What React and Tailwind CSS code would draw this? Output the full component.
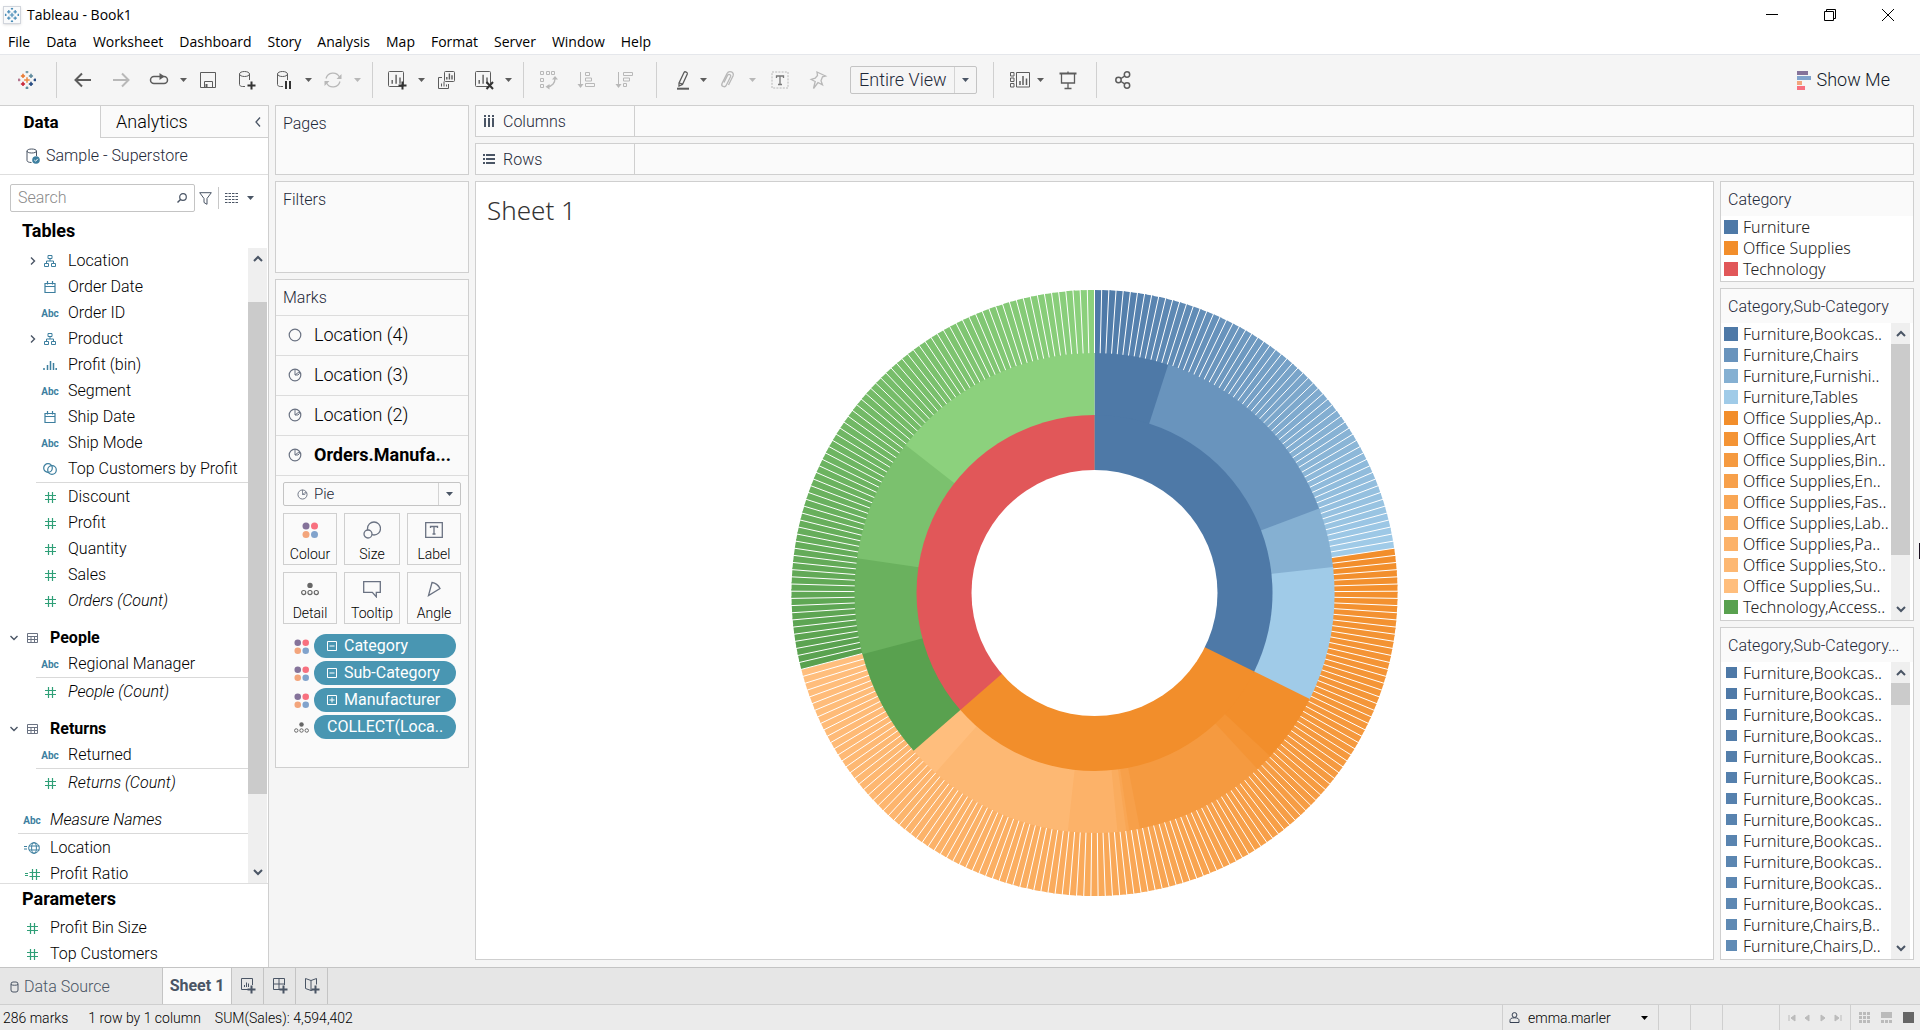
import React from 'react';

const FURNITURE = ['#4e79a7', '#a0cbe8'];
const OFFICE = ['#f28e2b', '#ffbe7d'];
const TECH = ['#59a14f', '#8cd17d'];

const mix = ([a, b], t) => {
    const ch = (hex, i) => parseInt(hex.slice(1 + i * 2, 3 + i * 2), 16);
    return `rgb(${[0, 1, 2].map((i) => Math.round(ch(a, i) + (ch(b, i) - ch(a, i)) * t)).join(',')})`;
};

const ramp = (pair, n) => Array.from({ length: n }, (_, i) => mix(pair, i / (n - 1)));

// ---------- chart ----------

// end angles in degrees, clockwise from the top
const categorySlices = [
    { end: 116.2, color: '#4e79a7' },
    { end: 228.9, color: '#f28e2b' },
    { end: 360, color: '#e15759' },
];

const subCategoryEnds = [17.9, 69.4, 83.8, 116.2, 132.9, 137.2, 169.1, 171.7, 172.4, 174.5, 186.4, 221.5, 228.9, 255.2, 278.3, 308.1, 360];
const subCategoryColors = [...ramp(FURNITURE, 4), ...ramp(OFFICE, 9), ...ramp(TECH, 4)];
const subCategorySlices = subCategoryEnds.map((end, i) => ({ end, color: subCategoryColors[i] }));

const manufacturerColors = [...ramp(FURNITURE, 60), ...ramp(OFFICE, 128), ...ramp(TECH, 77)];
const manufacturerSlices = manufacturerColors.map((color, i) => ({
    end: ((i + 1) * 360) / manufacturerColors.length,
    color,
}));

const polar = (r, deg) => {
    const a = (deg * Math.PI) / 180;
    return [(r * Math.sin(a)).toFixed(2), (-r * Math.cos(a)).toFixed(2)];
};

const wedge = (r, a0, a1) => `M0 0L${polar(r, a0)} A${r} ${r} 0 ${a1 - a0 > 180 ? 1 : 0} 1 ${polar(r, a1)}Z`;

// each slice runs a little under the next one, so no seam shows between them
const Pie = ({ slices, r, lines }) => (
    <g>
        {slices.map((s, i) => (
            <path key={i} d={wedge(r, i ? slices[i - 1].end : 0, Math.min(s.end + 0.4, 360))} fill={s.color} />
        ))}
        {lines && slices.map((s, i) => {
            const [x, y] = polar(r + 1, s.end);
            return <line key={i} x1="0" y1="0" x2={x} y2={y} stroke="#fff" strokeWidth="1" />;
        })}
    </g>
);

const Sunburst = () => (
    <svg viewBox="-356 -356 712 712" className="w-full min-h-0 flex-1" role="img" aria-label="Sales by category, sub-category and manufacturer">
        <Pie slices={manufacturerSlices} r={303} lines />
        <Pie slices={subCategorySlices} r={240} />
        <Pie slices={categorySlices} r={178} />
        <circle r="123" fill="#fff" />
    </svg>
);

// ---------- icons ----------

const Svg = ({ size = 20, w, h, className = '', children }) => (
    <svg width={w || size} height={h || size} viewBox={`0 0 ${w || size} ${h || size}`} fill="none" stroke="currentColor" className={`shrink-0 ${className}`}>
        {children}
    </svg>
);

const Caret = ({ className = '' }) => (
    <Svg w={7} h={4} className={className}><path d="M0 0h7L3.5 4z" fill="currentColor" stroke="none" /></Svg>
);

const logoMarks = [
    [9, 9, 4, '#eb8a44'], [5, 5, 3, '#e8762c'], [13, 5, 3, '#5b879b'], [5, 13, 3, '#c72035'], [13, 13, 3, '#1f457e'],
    [9, 1, 2, '#7199a6'], [9, 17, 2, '#59879b'], [1, 9, 2, '#b06f8a'], [17, 9, 2, '#1f457e'],
];

const Logo = ({ mono }) => (
    <Svg size={18}>
        {logoMarks.map(([x, y, r, c], i) => (
            <path key={i} d={`M${x - r / 1.4} ${y}h${r * 1.4}M${x} ${y - r / 1.4}v${r * 1.4}`} stroke={mono ? '#4a8db8' : c} strokeWidth="1.5" />
        ))}
    </Svg>
);

const BarsSheet = ({ x = 1, y = 1, s = 15 }) => (
    <g>
        <rect x={x + 0.5} y={y + 0.5} width={s} height={s} rx="1" />
        <path d={`M${x + s * 0.28} ${y + s * 0.85}v-${s * 0.25}M${x + s * 0.54} ${y + s * 0.85}v-${s * 0.6}M${x + s * 0.8} ${y + s * 0.85}v-${s * 0.42}`} strokeWidth="1.4" />
    </g>
);

const plusMark = <path d="M15.5 11.5v8M11.5 15.5h8" stroke="#333" strokeWidth="2" />;
const dbShape = <path d="M9 16.5H6.5c-2 0-3-1-3-2V4M13.500 4v6M3.500 4c0-1.400 2-2.500 5-2.500s5 1.100 5 2.500-2 2.500-5 2.500-5-1.100-5-2.500z" />;

const tools = {
    back: <path d="M18 10H2.500M9 3.500L2.500 10 9 16.500" strokeWidth="2" />,
    forward: <path d="M2 10h15.500M11 3.500l6.500 6.500-6.500 6.500" strokeWidth="2" />,
    replay: <><path d="M6 6.500H5a3.500 3.500 0 0 0 0 7h10a3.500 3.500 0 0 0 0-7h-3.500" strokeWidth="1.500" /><path d="M6 6.500h6" strokeWidth="1.500" /><path d="M10.500 3l5 3.500-5 3.500z" fill="currentColor" stroke="none" /></>,
    save: <><path d="M2.500 2.500h15v15h-15zM6.500 17.500v-6h8v6" /><path d="M8.500 14v3" strokeWidth="2" /></>,
    newData: <>{dbShape}{plusMark}</>,
    pause: <>{dbShape}<path d="M12 11v8M16 11v8" stroke="#333" strokeWidth="2" /></>,
    refresh: <><path d="M3 8.500a7.300 7.300 0 0 1 13.500-1.500M17 11.500a7.300 7.300 0 0 1-13.500 1.500" strokeWidth="1.300" /><path d="M18.500 4v5h-5zM1.500 16v-5h5z" fill="currentColor" stroke="none" /></>,
    newSheet: <><BarsSheet />{plusMark}</>,
    duplicate: <><BarsSheet x={8} y={1} s={10} /><path d="M6 7.500H2.500v11h10V14" /><path d="M5.500 16.500v-3M8 16.500v-5M10.500 16.500v-2" /></>,
    clear: <><BarsSheet /><path d="M12.500 12l6.500 7M19 12l-6.500 7" stroke="#333" strokeWidth="2" /></>,
    swap: <><path d="M2.500 1.500h3v3h-3zM8.500 1.500h3v3h-3zM13.500 1.500h3v3h-3zM2.500 8.500h3v3h-3zM2.500 14.500h3v3h-3z" /><path d="M17 8.500c0 4-2.500 8-7.500 8" strokeWidth="1.300" /><path d="M14 9.500L17 6l3 3.500zM11.500 14l-4 2.800 4 2.700z" fill="currentColor" stroke="none" /></>,
    sortAsc: <><path d="M4.500 2v14M9.500 2.500h4v3h-4zM9.500 8h6v3h-6zM9.500 13.500h9v3h-9z" /><path d="M1.500 14h6l-3 4z" fill="currentColor" stroke="none" /></>,
    sortDesc: <><path d="M4.500 2v14M9.500 2.500h9v3h-9zM9.500 8h6v3h-6zM9.500 13.500h3v3h-3z" /><path d="M1.500 14h6l-3 4z" fill="currentColor" stroke="none" /></>,
    pen: <><path d="M6 13l5-10.500c.8-1.500 4-.2 3.300 1.500L9.500 14.500 6 16zM6 12.500l3.500 1.800" strokeWidth="1.300" /><path d="M4 18.700h12" strokeWidth="2" /></>,
    clip: <path d="M6 12.500l3.500-7c1-2 4-1 3 1.200l-4.200 8.500c-1.400 2.800-5.500 1.200-4.300-1.800L9 3.500C11 0 16.500 2 15 6l-4.500 9" strokeWidth="1.300" />,
    text: <><rect x="2" y="2" width="16" height="16" strokeDasharray="2 1.200" /><path d="M6.500 8V6h7v2M10 6v8.500M8 14.500h4" stroke="#777" strokeWidth="1.300" /></>,
    pin: <path d="M9 2l8.500 4-3 .8-1.500 4 1.500 4-4.500-2.300-4.500 6 1.700-7-4-2 4-1.300L9.500 5.500z" strokeWidth="1.300" />,
    cards: <><path d="M.5 2.500h3.500v3.500h-3.500zM.5 8h3.500v3.500h-3.500zM.5 13.500h3.500v3.500h-3.500z" /><path d="M6.500 2.500h13v14.500h-13z" /><path d="M10 15v-4M13 15V6M16.500 15V8.500" strokeWidth="1.500" /></>,
    present: <><path d="M1.500 3.500h17" strokeWidth="2" /><path d="M3.500 4v9h13V4M10 1.500v2M10 13v5M6.500 18.500h7" strokeWidth="1.300" /></>,
    share: <g strokeWidth="1.500"><circle cx="5.500" cy="10" r="2.700" /><circle cx="14" cy="4.500" r="2.700" /><circle cx="14" cy="15.500" r="2.700" /><path d="M8 8.500l4-2.700M8 11.500l4 2.700" /></g>,
};

const fieldIcons = {
    hierarchy: <Svg size={12} className="text-[#3d7f9f]"><path d="M4 .5h4v3H4zM6 3.500v2.500M2.500 8V6h7v2M.5 8.500h4v3h-4zM7.500 8.500h4v3h-4z" /></Svg>,
    date: <Svg size={12} className="text-[#3d7f9f]"><path d="M1 2.500h10v9H1zM1 5.500h10M3.500 0v3.500M8.500 0v3.500" strokeWidth="1.200" /></Svg>,
    abc: <span className="text-[10px] font-bold text-[#3d7f9f]">Abc</span>,
    bin: <Svg w={14} h={10} className="text-[#3d7f9f]"><path d="M1 10V8M4.500 10V5M7.500 10V1M10.500 10V3M13.200 10V8" strokeWidth="1.500" /></Svg>,
    set: <Svg w={14} h={12} className="text-[#3d7f9f]"><circle cx="5" cy="5" r="4.300" strokeWidth="1.200" /><circle cx="9" cy="7" r="4.300" strokeWidth="1.200" /></Svg>,
    num: <Svg size={11} className="text-[#2f9f77]"><path d="M3.500 0v11M7.500 0v11M0 3.500h11M0 7.500h11" strokeWidth="1.200" /></Svg>,
    calcNum: <Svg w={15} h={11} className="text-[#2f9f77]"><path d="M0 4.500h3M0 6.500h3M7.500 0v11M11.500 0v11M4.500 3.500H15M4.500 7.500H15" strokeWidth="1.200" /></Svg>,
    calcGeo: <Svg w={16} h={12} className="text-[#3d7f9f]"><path d="M0 4.500h3M0 7h3M5 4h10.500M5 8h10.500" /><circle cx="10" cy="6" r="5.300" /><ellipse cx="10" cy="6" rx="2.400" ry="5.300" /></Svg>,
};

const PieIcon = ({ small, whole }) => (
    <svg viewBox="0 0 14 14" fill="none" stroke="currentColor" className={`shrink-0 text-gray-500 ${small ? 'size-[11px]' : 'size-[14px]'}`}>
        <circle cx="7" cy="7" r="5.800" strokeWidth="1.200" />
        {!whole && <path d="M7 1v6l4.500-3.500M7 7h3a3 3 0 0 0 1.500-3" />}
    </svg>
);

const ColourDots = ({ size = 16 }) => (
    <svg width={size} height={size} viewBox="0 0 16 16" className="shrink-0">
        <circle cx="4" cy="4" r="3.500" fill="#85739a" /><circle cx="12.500" cy="4" r="3.500" fill="#f8707f" />
        <circle cx="4" cy="12.500" r="3.500" fill="#f3a57c" /><circle cx="12.500" cy="12.500" r="3.500" fill="#81a3cc" />
    </svg>
);

const DetailIcon = ({ size = 18 }) => (
    <svg width={size} height={size} viewBox="0 0 20 18" fill="none" stroke="#666" strokeWidth="1.300" className="shrink-0">
        <circle cx="10" cy="5" r="3" fill="#666" stroke="none" />
        <circle cx="3" cy="13" r="2.300" /><circle cx="10" cy="13" r="2.300" /><circle cx="17" cy="13" r="2.300" />
    </svg>
);

const Chevron = ({ down, className = '' }) => (
    <Svg size={8} className={`text-gray-600 ${className}`}>
        <path d={down ? 'M.5 2L4 5.500 7.500 2' : 'M2 .5L5.500 4 2 7.500'} strokeWidth="1.400" />
    </Svg>
);

// ---------- top bars ----------

const menus = ['File', 'Data', 'Worksheet', 'Dashboard', 'Story', 'Analysis', 'Map', 'Format', 'Server', 'Window', 'Help'];

const TitleBar = () => (
    <header className="bg-white font-['Open_Sans',sans-serif] text-sm font-normal text-black">
        <div className="flex h-[29px] items-center">
            <span className="ml-[3px] mr-[6px] border border-gray-300 bg-gray-50 shadow-sm"><Svg size={16}><svg viewBox="-1 -1 20 20"><Logo mono /></svg></Svg></span>
            <span className="flex-1">Tableau - Book1</span>
            <button aria-label="Minimize" className="flex w-[58px] justify-center"><Svg size={12}><path d="M0 5.500h12" /></Svg></button>
            <button aria-label="Restore" className="flex w-[58px] justify-center"><Svg size={12}><path d="M.5 2.500h9v9h-9zM2.500 2.500v-2h9v9h-2" /></Svg></button>
            <button aria-label="Close" className="mr-[3px] flex w-[58px] justify-center"><Svg size={12}><path d="M0 0l12 12M12 0L0 12" /></Svg></button>
        </div>
        <nav className="flex h-[25px] items-center">
            {menus.map((m) => <button key={m} className="px-2">{m}</button>)}
        </nav>
    </header>
);

const Tool = ({ name, label, caret, near, off, className = 'ml-[18px]' }) => (
    <button aria-label={label} className={`flex items-center ${near ? 'gap-[7px]' : 'gap-[11px]'} ${off ? 'text-[#b8b8b8]' : 'text-[#5c5c5c]'} ${className}`}>
        <Svg>{tools[name]}</Svg>
        {caret && <Caret />}
    </button>
);

const Sep = ({ className }) => <span className={`h-9 w-px bg-[#d0d0d0] ${className}`} />;

const Toolbar = () => (
    <div className="flex h-[51px] shrink-0 items-center border-t border-gray-200">
        <button aria-label="Start page" className="ml-[18px]"><Logo /></button>
        <Sep className="ml-5" />
        <Tool name="back" label="Undo" className="ml-4" />
        <Tool name="forward" label="Redo" off />
        <Tool name="replay" label="Replay" caret />
        <Tool name="save" label="Save" className="ml-[11px]" />
        <Tool name="newData" label="New data source" />
        <Tool name="pause" label="Pause updates" caret />
        <Tool name="refresh" label="Refresh" caret off className="ml-[11px]" />
        <Sep className="ml-[11px]" />
        <Tool name="newSheet" label="New worksheet" caret className="ml-[14px]" />
        <Tool name="duplicate" label="Duplicate" className="ml-[11px]" />
        <Tool name="clear" label="Clear sheet" caret />
        <Sep className="ml-[11px]" />
        <Tool name="swap" label="Swap rows and columns" off className="ml-[14px]" />
        <Tool name="sortAsc" label="Sort ascending" off />
        <Tool name="sortDesc" label="Sort descending" off />
        <Sep className="ml-[22px]" />
        <Tool name="pen" label="Highlight" caret near className="ml-4" />
        <Tool name="clip" label="Group" caret off className="ml-[11px]" />
        <Tool name="text" label="Show mark labels" off className="ml-[14px]" />
        <Tool name="pin" label="Fix axes" off />
        <label className="relative ml-[22px] flex h-7 w-[127px] items-center rounded-xs border border-[#c4c4c4] bg-[#f5f5f5]">
            <select aria-label="Fit" className="w-full appearance-none pl-2 text-lg text-gray-800">
                <option>Entire View</option>
            </select>
            <span className="pointer-events-none absolute inset-y-0 right-0 flex w-[22px] items-center justify-center border-l border-[#d4d4d4] text-gray-600"><Caret /></span>
        </label>
        <Sep className="ml-4" />
        <Tool name="cards" label="Show/hide cards" caret near className="ml-4" />
        <Tool name="present" label="Presentation mode" className="ml-[14px]" />
        <Sep className="ml-[18px]" />
        <Tool name="share" label="Share" className="ml-4" />
        <button className="ml-auto mr-[30px] flex items-center gap-[6px] text-lg text-gray-900">
            <Svg w={14} h={19}>
                <g stroke="none">
                    <path d="M0 0h11v4H0z" fill="#85739a" /><path d="M0 5h14v4H0z" fill="#81a3cc" />
                    <path d="M0 10h5v4H0z" fill="#f3a57c" /><path d="M0 15h8v4H0z" fill="#f8707f" />
                </g>
            </Svg>
            Show Me
        </button>
    </div>
);

// ---------- data pane ----------

const ordersFields = [
    ['hierarchy', 'Location', 'open'],
    ['date', 'Order Date'],
    ['abc', 'Order ID'],
    ['hierarchy', 'Product', 'open'],
    ['bin', 'Profit (bin)'],
    ['abc', 'Segment'],
    ['date', 'Ship Date'],
    ['abc', 'Ship Mode'],
    ['set', 'Top Customers by Profit'],
    'rule',
    ['num', 'Discount'],
    ['num', 'Profit'],
    ['num', 'Quantity'],
    ['num', 'Sales'],
    ['num', 'Orders (Count)', 'italic'],
];

const Fields = ({ items, nested }) => (
    <ul className={nested ? 'pl-[36px]' : 'pl-[18px]'}>
        {items.map((f, i) => f === 'rule'
            ? <li key={i} aria-hidden="true" className="mb-px h-px bg-[#d9d9d9]" />
            : (
                <li key={i} className="flex h-[26px] items-center whitespace-nowrap">
                    {f[2] === 'open' && <Chevron className="-ml-[7px] -mr-px" />}
                    <span className="mr-[4px] flex w-7 justify-center">{fieldIcons[f[0]]}</span>
                    <span className={f[2] === 'italic' ? 'italic' : ''}>{f[1]}</span>
                </li>
            ))}
    </ul>
);

const TableHead = ({ name }) => (
    <h3 className="mt-[10px] flex h-[27px] items-center pl-[10px] font-bold">
        <Chevron down className="mr-[9px]" />
        <Svg w={11} h={10} className="mr-[12px] text-gray-500"><path d="M.5.5h10v9H.5zM.5 3.500h10M.5 6.500h10M4 3v6.500M7.500 3v6.500" /></Svg>
        {name}
    </h3>
);

const ScrollBar = ({ children }) => (
    <div className="flex w-[19px] shrink-0 flex-col bg-[#efefef] text-gray-600">
        {children}
    </div>
);

const ScrollArrow = ({ up, className = '' }) => (
    <button aria-label={up ? 'Scroll up' : 'Scroll down'} className={`flex h-[21px] shrink-0 items-center justify-center ${className}`}>
        <Svg w={10} h={7}><path d={up ? 'M1 6l4-4 4 4' : 'M1 1l4 4 4-4'} strokeWidth="2" /></Svg>
    </button>
);

const DataPane = () => (
    <aside className="flex w-[269px] shrink-0 flex-col border-r border-t border-[#cfcfcf] bg-white text-black">
        <div className="flex h-8 shrink-0 text-lg leading-8">
            <button className="w-[100px] pr-[18px] text-[17px] font-bold">Data</button>
            <button className="flex flex-1 items-center justify-between border-b border-l border-[#cfcfcf] bg-[#fafafa] pl-[15px] pr-[7px]">
                Analytics
                <Svg w={6} h={10} className="text-gray-600"><path d="M5 .5L1 5l4 4.500" strokeWidth="1.300" /></Svg>
            </button>
        </div>
        <div className="flex h-[37px] shrink-0 items-center gap-[6px] border-b border-[#dedede] pl-[26px] text-gray-800">
            <Svg w={14} h={16} className="text-gray-600">
                <path d="M5.500 14.500C2.500 14.500 1 13.500 1 12.500V3M10.500 3v5M1 3c0-1.200 2-2 4.700-2s4.800.8 4.800 2-2 2-4.800 2S1 4.200 1 3z" />
                <circle cx="10" cy="12" r="3.800" fill="#3d7f9f" stroke="none" /><path d="M8.300 12l1.300 1.200 2.200-2.400" stroke="#fff" />
            </Svg>
            Sample - Superstore
        </div>
        <div className="mt-[9px] flex h-7 shrink-0 items-center px-[10px]">
            <label className="flex h-7 w-[185px] items-center rounded-xs border border-[#c4c4c4] px-[7px]">
                <input aria-label="Search" placeholder="Search" className="min-w-0 flex-1 outline-none placeholder:text-[#8a8a8a]" />
                <Svg size={10} className="text-gray-600"><circle cx="6" cy="4" r="3.300" strokeWidth="1.200" /><path d="M3.500 6.500L.5 9.500" strokeWidth="1.400" /></Svg>
            </label>
            <button aria-label="Filter" className="ml-1"><Svg w={13} h={13} className="text-gray-600"><path d="M.7.700h11.600L8 6.500v5.800L5 10.500v-4z" /></Svg></button>
            <span className="ml-[6px] h-[22px] w-px bg-[#c8c8c8]" />
            <button aria-label="View options" className="ml-[6px] flex items-center gap-[9px] text-gray-600">
                <Svg w={13} h={10}><path d="M0 .5h13M0 3.500h13M0 6.500h13M0 9.500h13" strokeDasharray="2.500 1" /></Svg>
                <Caret />
            </button>
        </div>
        <h2 className="flex h-[36px] shrink-0 items-center pl-[22px] pt-[2px] text-lg font-bold">Tables</h2>
        <div className="flex min-h-0 flex-1 overflow-hidden pr-px">
            <div className="min-w-0 flex-1">
                <Fields nested items={ordersFields} />
                <TableHead name="People" />
                <Fields nested items={[['abc', 'Regional Manager'], 'rule', ['num', 'People (Count)', 'italic']]} />
                <TableHead name="Returns" />
                <Fields nested items={[['abc', 'Returned'], 'rule', ['num', 'Returns (Count)', 'italic']]} />
                <div className="mt-[11px]">
                    <Fields items={[['abc', 'Measure Names', 'italic'], 'rule', ['calcGeo', 'Location'], ['calcNum', 'Profit Ratio']]} />
                </div>
            </div>
            <ScrollBar>
                <ScrollArrow up className="mb-[33px]" />
                <div className="flex-1 bg-[#cbcbcb]" />
                <ScrollArrow className="mt-[68px]" />
            </ScrollBar>
        </div>
        <div className="shrink-0 border-t border-[#dedede]">
            <h2 className="mb-[2px] flex h-[29px] items-center pl-[22px] text-lg font-bold">Parameters</h2>
            <Fields items={[['num', 'Profit Bin Size'], ['num', 'Top Customers']]} />
        </div>
    </aside>
);

// ---------- cards ----------

const card = 'border border-[#cfcfcf] bg-[#fafafa] text-gray-800';

const markLayers = [['Location (4)', true], ['Location (3)'], ['Location (2)'], ['Orders.Manufa...']];

const markButtons = [
    ['Colour', <ColourDots />],
    ['Size', <Svg size={18}><circle cx="11" cy="7.500" r="6.500" strokeWidth="1.300" /><circle cx="5" cy="13" r="4" fill="#fafafa" strokeWidth="1.300" /></Svg>],
    ['Label', <Svg size={18}><path d="M.7 1.700h16.600v14.600H.7z" strokeWidth="1.300" /><path d="M5.500 7V5.500h7V7M9 5.500v7.500M7.500 13h3" strokeWidth="1.300" /></Svg>],
    ['Detail', <DetailIcon />],
    ['Tooltip', <Svg size={18}><path d="M.7 1.700h16.600v10.600h-4v4.500l-4-4.500H.7z" strokeWidth="1.300" /></Svg>],
    ['Angle', <Svg size={18}><path d="M7 2.500c4 .5 6.500 3 8 6L3.500 15.500z" strokeWidth="1.300" /></Svg>],
];

const pills = [['Category', 'minus'], ['Sub-Category', 'minus'], ['Manufacturer', 'plus'], ['COLLECT(Loca..']];

const Cards = () => (
    <section className="flex w-[194px] shrink-0 flex-col gap-[6px]">
        <div className={`h-[70px] px-[7px] pt-[6px] ${card}`}>Pages</div>
        <div className={`h-[92px] px-[7px] pt-[6px] ${card}`}>Filters</div>
        <div className={`h-[489px] ${card}`}>
            <div className="flex h-[35px] items-center px-[7px]">Marks</div>
            {markLayers.map(([name, whole], i) => (
                <button key={name} className={`flex h-10 w-full items-center gap-[12px] border-t border-[#dcdcdc] pb-px pl-[12px] text-lg text-black ${i === 3 ? 'font-bold' : ''}`}>
                    <PieIcon whole={whole} />
                    {name}
                </button>
            ))}
            <div className="border-t border-[#dcdcdc] px-[7px] pt-[6px]">
                <label className="relative flex h-6 items-center rounded-xs border border-[#c4c4c4] pl-[13px]">
                    <PieIcon small />
                    <select aria-label="Mark type" className="ml-[6px] w-full appearance-none text-[15px]">
                        <option>Pie</option>
                    </select>
                    <span className="pointer-events-none absolute inset-y-0 right-0 flex w-[22px] items-center justify-center border-l border-[#d4d4d4] text-gray-600"><Caret /></span>
                </label>
                <div className="mt-[7px] grid grid-cols-[54px_56px_54px] gap-[7px]">
                    {markButtons.map(([name, icon]) => (
                        <button key={name} className="flex h-[52px] flex-col items-center justify-between border border-[#cfcfcf] pt-[6px] text-sm text-black">
                            <span className="flex h-5 items-center text-gray-500">{icon}</span>
                            {name}
                        </button>
                    ))}
                </div>
            </div>
            <ul className="mt-[10px] space-y-[3px] pl-[18px] pr-[12px]">
                {pills.map(([name, sign]) => (
                    <li key={name} className="flex items-center">
                        <span className="flex w-[20px] shrink-0">{sign ? <ColourDots size={15} /> : <DetailIcon size={15} />}</span>
                        <button className="flex h-6 flex-1 items-center gap-[7px] rounded-full bg-[#4996b2] pl-[13px] font-normal text-white">
                            {sign && <Svg size={10}><path d="M.5.5h9v9h-9zM2.500 5h5" />{sign === 'plus' && <path d="M5 2.500v5" />}</Svg>}
                            {name}
                        </button>
                    </li>
                ))}
            </ul>
        </div>
    </section>
);

const Shelf = ({ name, icon }) => (
    <div className={`flex h-8 shrink-0 ${card}`}>
        <div className="flex w-[159px] items-center gap-2 border-r border-[#cfcfcf] pl-[7px]">
            <Svg size={12} className="text-gray-600">{icon}</Svg>
            <span className="pt-px">{name}</span>
        </div>
    </div>
);

// ---------- legends ----------

const subCategoryNames = [
    'Furniture,Bookcas..', 'Furniture,Chairs', 'Furniture,Furnishi..', 'Furniture,Tables',
    'Office Supplies,Ap..', 'Office Supplies,Art', 'Office Supplies,Bin..', 'Office Supplies,En..', 'Office Supplies,Fas..',
    'Office Supplies,Lab..', 'Office Supplies,Pa..', 'Office Supplies,Sto..', 'Office Supplies,Su..', 'Technology,Access..',
];

const categoryLegend = [['Furniture', '#4e79a7'], ['Office Supplies', '#f28e2b'], ['Technology', '#e15759']];
const subCategoryLegend = subCategoryNames.map((name, i) => [name, subCategoryColors[i]]);
const manufacturerLegend = [...Array(12).fill('Furniture,Bookcas..'), 'Furniture,Chairs,B..', 'Furniture,Chairs,D..']
    .map((name, i) => [name, manufacturerColors[i]]);

const Legend = ({ title, items, small, className = '', children }) => (
    <div className={`flex flex-col border border-[#cfcfcf] bg-white ${className}`}>
        <h3 className="flex h-[34px] shrink-0 items-center whitespace-nowrap bg-[#fafafa] pl-[7px] pt-px text-gray-800">{title}</h3>
        <div className="flex min-h-0 flex-1 pr-[3px]">
            <ul className="min-w-0 flex-1 font-['Noto_Sans',sans-serif] text-[#222]">
                {items.map(([name, color], i) => (
                    <li key={i} className="flex h-[21px] items-center whitespace-nowrap pl-[3px]">
                        <span className="mr-[5px] flex w-[14px] shrink-0 justify-center">
                            <span className={small ? 'size-[11px]' : 'size-[14px]'} style={{ backgroundColor: color }} />
                        </span>
                        {name}
                    </li>
                ))}
            </ul>
            {children}
        </div>
    </div>
);

const Legends = () => (
    <aside className="flex w-[194px] shrink-0 flex-col gap-[6px]">
        <Legend title="Category" items={categoryLegend} className="h-[101px] shrink-0" />
        <Legend title="Category,Sub-Category" items={subCategoryLegend} className="h-[333px] shrink-0">
            <ScrollBar>
                <ScrollArrow up />
                <div className="flex-1 bg-[#cbcbcb]" />
                <ScrollArrow className="mt-[44px]" />
            </ScrollBar>
        </Legend>
        <Legend title="Category,Sub-Category..." items={manufacturerLegend} small className="min-h-0 flex-1">
            <ScrollBar>
                <ScrollArrow up />
                <div className="h-[22px] bg-[#cbcbcb]" />
                <ScrollArrow className="mt-auto" />
            </ScrollBar>
        </Legend>
    </aside>
);

// ---------- bottom bars ----------

const SheetTabs = () => (
    <nav className="flex h-[37px] shrink-0 border-t border-[#c4c4c4] bg-[#e6e6e6] text-gray-600">
        <button className="flex w-[163px] items-center gap-[5px] border-r border-[#c4c4c4] pl-[10px] pt-px">
            <Svg w={9} h={12}><rect x="1" y="1" width="7" height="10" rx="2" /><path d="M1 3.500c1 1 6 1 7 0" /></Svg>
            Data Source
        </button>
        <button className="w-[69px] border-r border-[#c4c4c4] bg-[#fafafa] font-bold">Sheet 1</button>
        <button aria-label="New worksheet" className="flex w-8 items-center justify-center border-r border-[#c4c4c4]">
            <Svg size={16}><path d="M8.500 11.500h-7v-11h11V7M4.500 9V7M6.500 9V4.500M8.500 9V5.500" /><path d="M11.500 7.500v8M7.500 11.500h8" strokeWidth="2" /></Svg>
        </button>
        <button aria-label="New dashboard" className="flex w-8 items-center justify-center border-r border-[#c4c4c4]">
            <Svg size={16}><path d="M8.500 11.500h-7v-11h11V7M1.500 6h11M7 .5v11" /><path d="M11.500 7.500v8M7.500 11.500h8" strokeWidth="2" /></Svg>
        </button>
        <button aria-label="New story" className="flex w-8 items-center justify-center border-r border-[#c4c4c4]">
            <Svg size={16}><path d="M12.500 6.500v-6L7 2.500 1.500.5v10L7 12.500v-10M7 12.500l1.500-.5" /><path d="M11.500 7.500v8M7.500 11.500h8" strokeWidth="2" /></Svg>
        </button>
    </nav>
);

const StatusBar = () => (
    <footer className="flex h-[26px] shrink-0 items-center border-t border-[#cfcfcf] bg-[#ebebeb] text-sm text-black">
        <span className="ml-[3px]">286 marks</span>
        <span className="ml-[20px]">1 row by 1 column</span>
        <span className="ml-[14px]">SUM(Sales): 4,594,402</span>
        <label className="relative ml-auto flex h-full w-[157px] items-center gap-[8px] border-x border-[#cfcfcf] pl-[6px]">
            <Svg size={11} className="text-gray-700"><circle cx="5.500" cy="3" r="2.400" /><path d="M1 10.500V8.500c0-2 1.500-2.700 4.500-2.700S10 6.500 10 8.500v2z" /></Svg>
            <select aria-label="Signed-in user" className="w-full appearance-none text-sm">
                <option>emma.marler</option>
            </select>
            <Caret className="absolute right-[10px]" />
        </label>
        <span className="h-full w-8 border-r border-[#cfcfcf]" />
        <span className="h-full w-8 border-r border-[#cfcfcf]" />
        <span className="h-full w-[57px] border-r border-[#cfcfcf]" />
        <span className="flex h-full w-[71px] items-center justify-between border-r border-[#cfcfcf] px-2 text-[#bbb]">
            {[['First sheet', 'M1 1v6M7 1L3 4l4 3z'], ['Previous sheet', 'M6 1L2 4l4 3z'], ['Next sheet', 'M2 1l4 3-4 3z'], ['Last sheet', 'M7 1v6M1 1l4 3-4 3z']].map(([label, d]) => (
                <button key={label} aria-label={label}><Svg size={8}><path d={d} fill="currentColor" /></Svg></button>
            ))}
        </span>
        <span className="flex items-center gap-[11px] pl-2 pr-[6px] text-[#bbb]">
            <button aria-label="Show sheet sorter"><Svg size={11}><path d="M0 1.500h11M0 5.500h11M0 9.500h11" strokeWidth="3" strokeDasharray="3 1" /></Svg></button>
            <button aria-label="Show filmstrip"><Svg size={11}><path d="M0 3h11" strokeWidth="6" /><path d="M0 9.500h11" strokeWidth="3" strokeDasharray="3 1" /></Svg></button>
            <button aria-label="Show tabs"><Svg size={11}><path d="M0 0h11v11H0z" fill="#666" stroke="none" /></Svg></button>
        </span>
    </footer>
);

export default function App() {
    return (
        <div className="flex h-screen flex-col overflow-hidden bg-[#f5f5f5] font-['Roboto',sans-serif] text-base font-light">
            <TitleBar />
            <Toolbar />
            <main className="flex min-h-0 flex-1 gap-[6px] pr-[6px]">
                <DataPane />
                <Cards />
                <div className="flex min-w-0 flex-1 flex-col gap-[6px] pb-[7px]">
                    <Shelf name="Columns" icon={<path d="M2 0v2M6 0v2M10 0v2M2 3v9M6 3v9M10 3v9" strokeWidth="2" />} />
                    <Shelf name="Rows" icon={<path d="M0 2h2M0 6h2M0 10h2M3 2h9M3 6h9M3 10h9" strokeWidth="2" />} />
                    <div className="flex min-h-0 flex-1 gap-[6px]">
                        <section className="flex min-w-0 flex-1 flex-col border border-[#cfcfcf] bg-white pb-[10px]">
                            <h1 className="flex h-[55px] shrink-0 items-center pl-[11px] pt-[2px] font-['Noto_Sans',sans-serif] text-[26px] text-[#333]">Sheet 1</h1>
                            <Sunburst />
                        </section>
                        <Legends />
                    </div>
                </div>
            </main>
            <SheetTabs />
            <StatusBar />
            {/* pointer parked on the window edge */}
            <span className="pointer-events-none fixed right-0 top-[543px] h-4 w-px bg-[#1a1020]" />
        </div>
    );
}
